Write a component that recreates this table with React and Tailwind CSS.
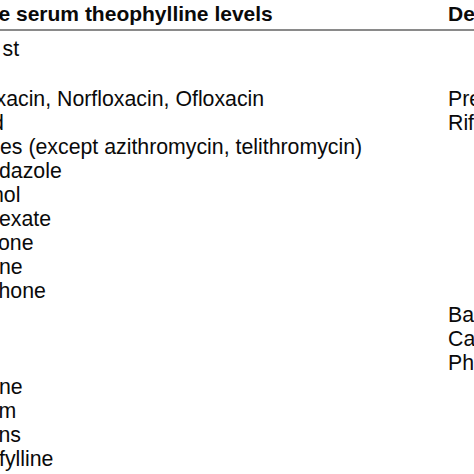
export default function App() {
  const left = [
    { t: "xacin, Norfloxacin, Ofloxacin", ml: "-ml-[4.5px]" },
    { t: "d", ml: "-ml-[8px]" },
    { t: "es (except azithromycin, telithromycin)", ml: "ml-0" },
    { t: "dazole", ml: "-ml-[1px]" },
    { t: "nol", ml: "-ml-[8px]" },
    { t: "exate", ml: "-ml-[1px]" },
    { t: "one", ml: "-ml-[2px]" },
    { t: "ne", ml: "-ml-[1px]" },
    { t: "hone", ml: "-ml-[1.5px]" },
    { t: "", ml: "ml-0" },
    { t: "", ml: "ml-0" },
    { t: "", ml: "ml-0" },
    { t: "ne", ml: "-ml-[1px]" },
    { t: "m", ml: "-ml-[1.5px]" },
    { t: "ns", ml: "-ml-[1.5px]" },
    { t: "fylline", ml: "-ml-[1px]" },
  ];
  const right = [
    "Pre",
    "Rifampin",
    "",
    "",
    "",
    "",
    "",
    "",
    "",
    "Barbiturates",
    "Carbamazepine",
    "Phenytoin",
    "",
    "",
    "",
    "",
  ];
  return (
    <div
      className="w-[474px] h-[474px] overflow-hidden bg-white text-[#0a0a0a] text-[21.3px] leading-[24px]"
      style={{ fontFamily: '"Liberation Sans", Arial, sans-serif' }}
    >
      <div className="grid grid-cols-[448px_200px] h-[29px] pt-[2px] text-[21px] font-bold whitespace-nowrap">
        <div className="-ml-[1.5px]">e serum theophylline levels</div>
        <div>Decrease serum theophylline levels</div>
      </div>
      <div className="h-[2px] w-full bg-[#8a8a8a]" />
      <div className="grid grid-cols-[448px_200px] mt-[6px] whitespace-nowrap">
        <div className="ml-[2.5px]">st</div>
        <div />
      </div>
      <div className="grid grid-cols-[448px_200px] mt-[25.5px] whitespace-nowrap">
        {left.map((row, i) => (
          <div key={i} className="contents">
            <div className={`h-[24px] ${row.ml}`}>{row.t}</div>
            <div className="h-[24px]">{right[i]}</div>
          </div>
        ))}
      </div>
    </div>
  );
}
